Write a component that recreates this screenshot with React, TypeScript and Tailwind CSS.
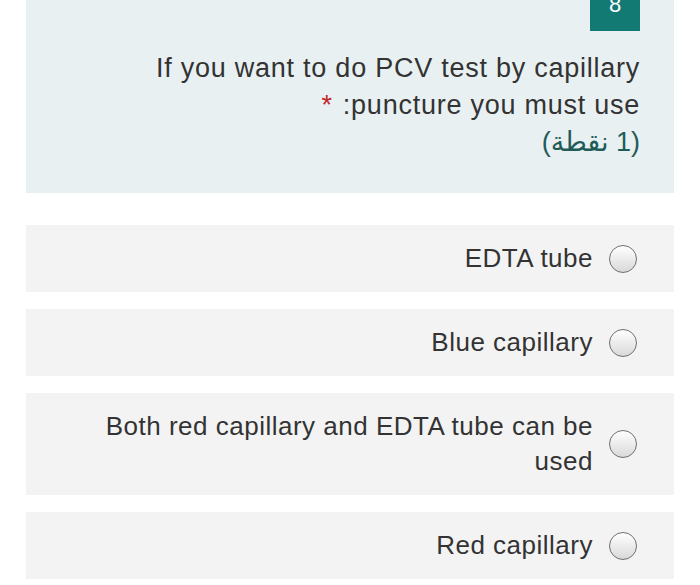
export default function App() {
  const options = [
    "EDTA tube",
    "Blue capillary",
    "Both red capillary and EDTA tube can be used",
    "Red capillary",
  ];

  return (
    <div
      className="w-[700px] h-[585px] bg-white overflow-hidden text-[#333333]"
      style={{ fontFamily: '"Liberation Sans", Arial, sans-serif' }}
    >
      {/* Question header */}
      <div className="mx-[26px] h-[193px] bg-[#e9f0f2] pr-[34px] pl-[40px] flex flex-col items-end">
        <div className="w-[50px] h-[31px] bg-[#127a73] text-white overflow-hidden flex justify-center">
          <span className="text-[22px] leading-[22px] -mt-[6px]">8</span>
        </div>
        <div className="mt-[19px] text-right text-[27px] leading-[37px] tracking-[0.75px]">
          <div>If you want to do PCV test by capillary</div>
          <div>
            <span className="text-[#c0282d] mr-[10px]">*</span>:puncture you must use
          </div>
          <div
            dir="rtl"
            className="text-[#1f5c58] tracking-normal"
            style={{ fontFamily: '"Liberation Sans", "DejaVu Sans", sans-serif' }}
          >
            (1 نقطة)
          </div>
        </div>
      </div>

      {/* Options */}
      <div className="mt-[32px] flex flex-col gap-[17px]">
        {options.map((o) => (
          <div
            key={o}
            className="mx-[26px] bg-[#f3f3f3] py-4 pl-[60px] pr-[37px] flex items-center justify-end gap-[16px]"
          >
            <div className="text-right text-[26px] leading-[35px] tracking-[0.5px]">{o}</div>
            <div className="shrink-0 w-[28px] h-[28px] rounded-full border-[1.5px] border-[#6f6f6f] bg-gradient-to-b from-white to-[#d9d9d9]" />
          </div>
        ))}
      </div>
    </div>
  );
}
